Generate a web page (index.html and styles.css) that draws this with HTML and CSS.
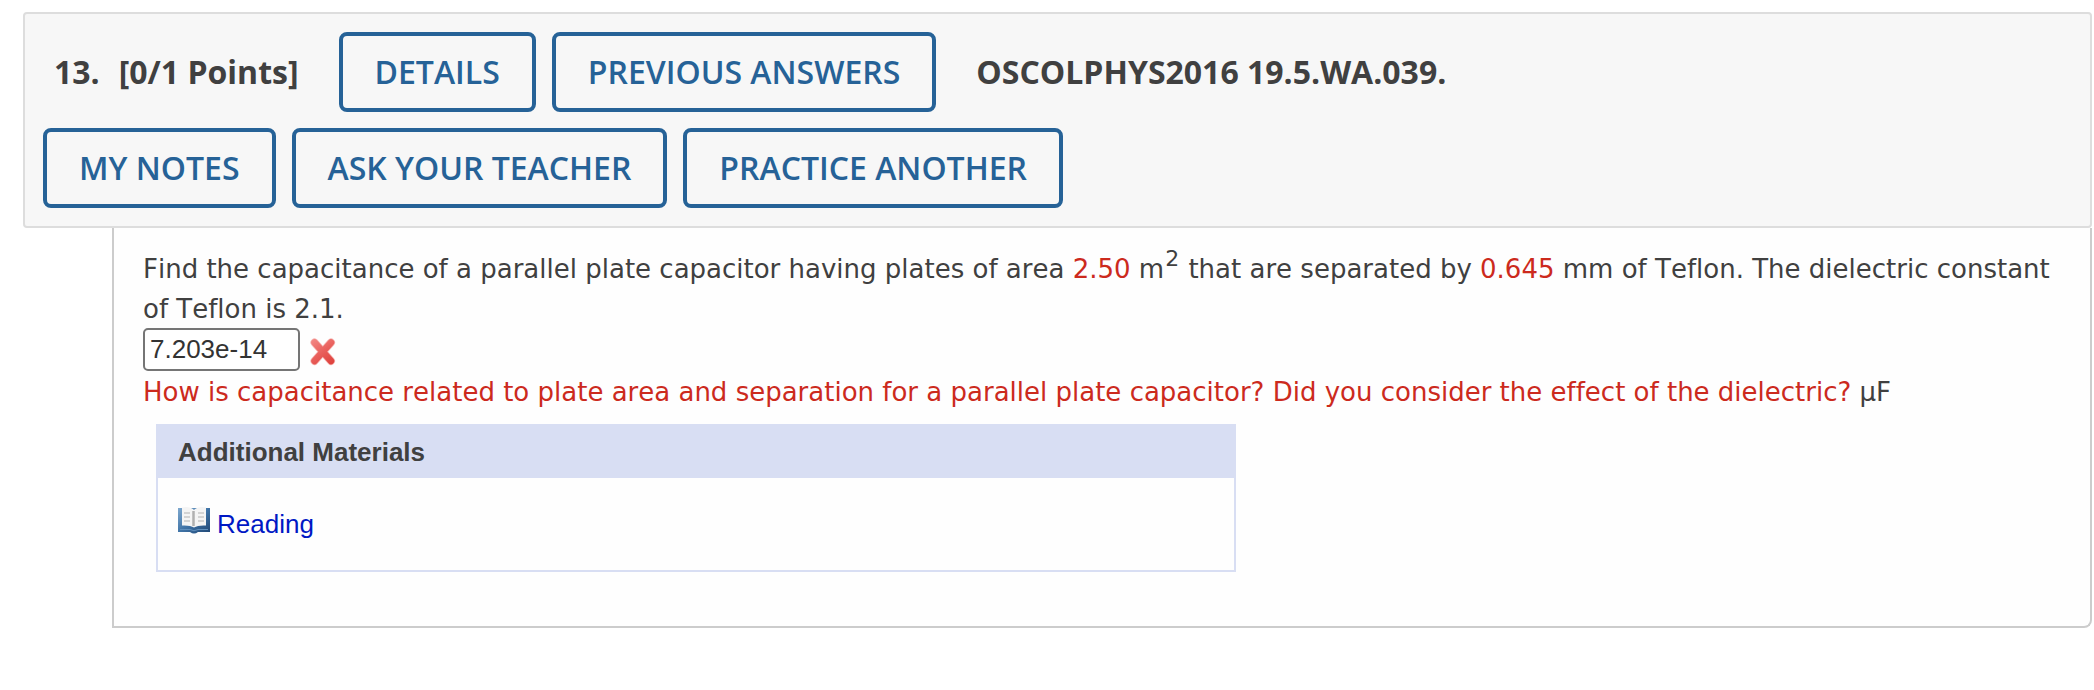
FILE: index.html
```html
<!DOCTYPE html>
<html lang="en">
<head>
  <meta charset="UTF-8">
  <title>Question 13</title>
  <link rel="stylesheet" href="styles.css">
</head>
<body>

  <div class="header">
    <div class="row">
      <span class="number">13.</span>
      <span class="points">[0/1 Points]</span>
      <button class="btn">DETAILS</button>
      <button class="btn">PREVIOUS ANSWERS</button>
      <span class="source">OSCOLPHYS2016 19.5.WA.039.</span>
    </div>
    <div class="row">
      <button class="btn">MY NOTES</button>
      <button class="btn">ASK YOUR TEACHER</button>
      <button class="btn">PRACTICE ANOTHER</button>
    </div>
  </div>

  <div class="question">
    <div class="line">Find the capacitance of a parallel plate capacitor having plates of area <span class="red">2.50</span> m<sup>2</sup> that are separated by <span class="red">0.645</span> mm of Teflon. The dielectric constant</div>
    <div class="line">of Teflon is 2.1.</div>
    <div class="answer">
      <input type="text" value="7.203e-14">
      <svg class="wrong" width="28" height="30" viewBox="0 0 28 30">
        <defs>
          <linearGradient id="cross" gradientUnits="userSpaceOnUse" x1="4" y1="2" x2="22" y2="28">
            <stop offset="0" stop-color="#f28783"/>
            <stop offset="0.5" stop-color="#e9605c"/>
            <stop offset="1" stop-color="#de403b"/>
          </linearGradient>
        </defs>
        <path d="M5.500 5.500 L22 24 M22 5.500 L5.500 24" fill="none" stroke="#f6b5b2" stroke-width="8" stroke-linecap="round"/>
        <path d="M5.500 5.500 L22 24 M22 5.500 L5.500 24" fill="none" stroke="url(#cross)" stroke-width="6.500" stroke-linecap="round"/>
      </svg>
    </div>
    <div class="line"><span class="red">How is capacitance related to plate area and separation for a parallel plate capacitor? Did you consider the effect of the dielectric?</span> µF</div>

    <div class="materials">
      <div class="title">Additional Materials</div>
      <div class="content">
        <svg class="book" width="32" height="28" viewBox="0 0 32 28">
          <defs>
            <linearGradient id="cover" x1="0" y1="0" x2="1" y2="1">
              <stop offset="0" stop-color="#7fa9cf"/>
              <stop offset="0.5" stop-color="#3f73a6"/>
              <stop offset="1" stop-color="#1f4674"/>
            </linearGradient>
          </defs>
          <path d="M0 2 H32 V26 H20 Q16 29 12 26 H0 Z" fill="url(#cover)"/>
          <path d="M2 23.500 H12 Q16 26 20 23.500 H30" fill="none" stroke="#5f8fbd" stroke-width="1"/>
          <path d="M4 1.500 Q12 0 16 4 Q20 0 28 1.500 V19.500 Q20 19 16 21.500 Q12 19 4 19.500 Z" fill="#f4f4f4"/>
          <path d="M15.500 5 V20" stroke="#b0b0b0" stroke-width="2.500"/>
          <path d="M6 7 H12 M6 11 H12 M6 15 H12 M20 7 H26 M20 11 H26 M20 15 H26" stroke="#c8c8c8" stroke-width="1.500"/>
        </svg>
        <a href="#">Reading</a>
      </div>
    </div>
  </div>

</body>
</html>
```

FILE: styles.css
```css
body {
  margin: 0;
  padding: 12px 2px 0 23px;
  background: #fff;
  color: #404040;
}
.header {
  box-sizing: border-box;
  height: 216px;
  padding: 18px;
  border: 2px solid #ddd;
  border-radius: 4px;
  background: #f7f7f7;
  font: bold 32px/80px "Open Sans", sans-serif;
}
.row {
  display: flex;
  gap: 16px;
  height: 80px;
  margin-bottom: 16px;
  white-space: nowrap;
}
.number {
  margin-left: 11px;
}
.points {
  margin-left: 3px;
  margin-right: 24px;
}
.source {
  margin-left: 24px;
}
.btn {
  box-sizing: border-box;
  height: 80px;
  padding: 0 32px;
  border: 4px solid #266297;
  border-radius: 8px;
  background: none;
  color: #266297;
  font: 600 32px/72px "Open Sans", sans-serif;
}
.question {
  box-sizing: border-box;
  height: 400px;
  margin-left: 89px;
  padding: 20px 0 0 29px;
  border: 2px solid #ccc;
  border-top: none;
  border-radius: 0 0 8px 0;
  background: #fefefe;
  font: 26px/40px Verdana, "DejaVu Sans", sans-serif;
}
.line {
  height: 40px;
  line-height: 42px;
  white-space: nowrap;
  font-kerning: none;
  font-variant-ligatures: none;
}
.red {
  color: #cc2a1d;
}
sup {
  margin-left: 1px;
  margin-right: 1px;
  font-size: 22px;
  line-height: 0;
  vertical-align: 12px;
}
.answer {
  display: flex;
  height: 43px;
}
input {
  box-sizing: border-box;
  width: 157px;
  height: 43px;
  margin: 0;
  padding: 0 6px 1px 5px;
  border: 2px solid #757575;
  border-radius: 5px;
  background: #fff;
  color: #333;
  font: 26px "Liberation Sans", Arial, sans-serif;
}
.wrong {
  margin: 9px 0 0 9px;
}
.materials {
  box-sizing: border-box;
  width: 1080px;
  height: 148px;
  margin: 13px 0 0 13px;
  border: 2px solid #d8def3;
  font: 26px/52px "Liberation Sans", Arial, sans-serif;
}
.title {
  height: 52px;
  padding-left: 20px;
  background: #d8def3;
  font-weight: bold;
}
.content {
  display: flex;
  padding: 20px;
}
.book {
  margin: 8px 7px 0 0;
}
a {
  color: #0018c4;
  text-decoration: none;
}
```
